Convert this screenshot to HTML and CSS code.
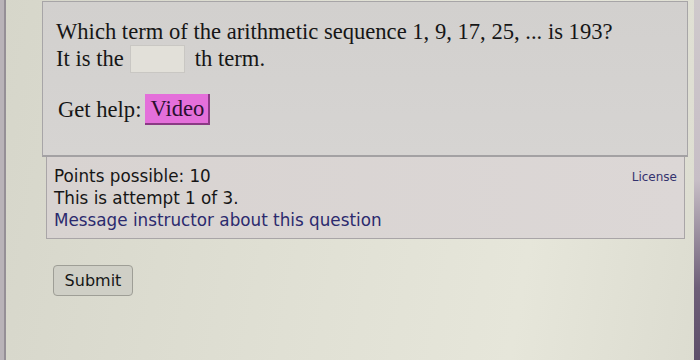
FILE: index.html
```html
<!DOCTYPE html>
<html>
<head>
<meta charset="utf-8">
<link rel="stylesheet" href="styles.css">
</head>
<body>
<div class="screen">
  <div class="gutter"></div>
  <div class="page">
    <div class="question">
      <p class="q-line">Which term of the arithmetic sequence 1, 9, 17, 25, ... is 193?</p>
      <p class="q-line">It is the <span class="answer"></span> th term.</p>
      <p class="help">Get help: <span class="video">Video</span></p>
    </div>
    <div class="info">
      <div class="info-text">
        <div>Points possible: 10</div>
        <div>This is attempt 1 of 3.</div>
        <div class="link">Message instructor about this question</div>
      </div>
      <div class="license">License</div>
    </div>
    <div class="actions">
      <span class="submit">Submit</span>
    </div>
  </div>
  <div class="edge"></div>
</div>
</body>
</html>
```
FILE: styles.css
```css
html, body {
  margin: 0;
  padding: 0;
  width: 700px;
  height: 360px;
  overflow: hidden;
  background: #dcdcd0;
}
.screen {
  display: flex;
  width: 700px;
  height: 360px;
  background: linear-gradient(100deg, #d6d6ca 0%, #e0e0d4 45%, #e6e6da 75%, #dcdcd0 100%);
}
.gutter {
  width: 4px;
  background: #b9b3b8;
}
.page {
  flex: 1;
  border-left: 2px solid #958f96;
  padding-left: 36px;
  padding-right: 6px;
}
.edge {
  width: 6px;
  background: linear-gradient(180deg, #cfc9cc 0%, #c7bec6 50%, #6e5f78 80%, #5e4f6a 100%);
}
.question {
  margin-top: 1px;
  height: 156px;
  box-sizing: border-box;
  border: 1px solid #a7a5a7;
  border-bottom: 2px solid #a3a1a3;
  background: linear-gradient(180deg, #d2d0ce, #d6d4d2);
  padding: 16px 0 0 13px;
  font-family: "Liberation Serif", "Times New Roman", serif;
  font-size: 22.6px;
  color: #161616;
}
.q-line {
  margin: 0;
  line-height: 27px;
  height: 27px;
  display: flex;
  align-items: center;
}
.answer {
  display: inline-block;
  width: 55px;
  height: 28px;
  margin: 0 10px 0 6px;
  box-sizing: border-box;
  border: 1px solid #c9c7c3;
  background: #e2e0d9;
}
.help {
  margin: 22px 0 0 2px;
  display: flex;
  align-items: center;
  height: 31px;
}
.video {
  display: inline-block;
  margin-left: 4px;
  padding: 0 4px 0 5px;
  height: 31px;
  line-height: 29px;
  box-sizing: border-box;
  background: #e46fda;
  border-right: 2px solid #8a3a84;
  border-bottom: 2px solid #8a3a84;
  color: #2a1030;
}
.info {
  margin: 0 3px 0 4px;
  height: 82px;
  box-sizing: border-box;
  border: 1px solid #a9a5a7;
  border-top: none;
  background: linear-gradient(90deg, #d8d3d1, #dcd7d6);
  display: flex;
  justify-content: space-between;
  padding: 8px 7px 0 7px;
  font-family: "DejaVu Sans", "Open Sans", sans-serif;
}
.info-text {
  font-size: 16.8px;
  line-height: 22px;
  color: #161616;
}
.link {
  color: #2b2a6e;
}
.license {
  font-size: 12px;
  color: #34326e;
  padding-top: 5px;
}
.actions {
  padding: 26px 0 0 11px;
}
.submit {
  display: inline-block;
  width: 80px;
  height: 31px;
  box-sizing: border-box;
  border: 1px solid #9e9e96;
  border-radius: 4px;
  background: #cfcfc6;
  text-align: center;
  line-height: 29px;
  font-family: "DejaVu Sans", "Open Sans", sans-serif;
  font-size: 16px;
  color: #161616;
}
```
